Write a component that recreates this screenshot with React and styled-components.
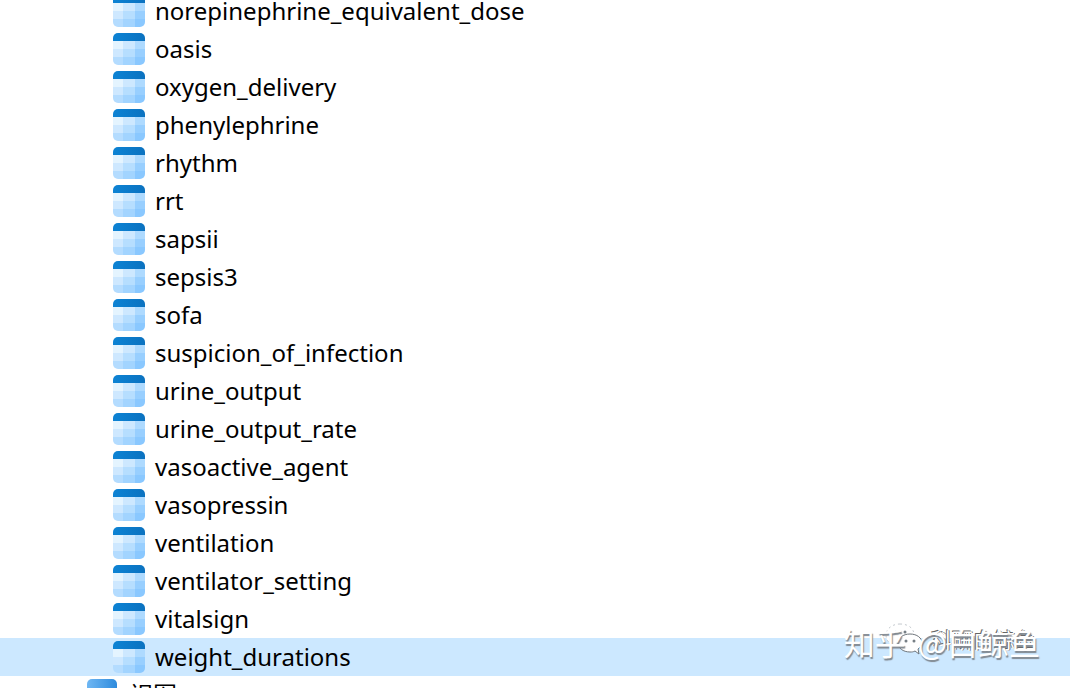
import React from "react";
import styled, { createGlobalStyle } from "styled-components";

const GlobalStyle = createGlobalStyle`
  * { box-sizing: border-box; }
  body { margin: 0; background: #fff; overflow: hidden; }
`;

const Panel = styled.main`
  position: relative;
  height: 100vh;
  overflow: hidden;
  background: #fff;
  color: #000;
  font-family: "Noto Sans", "Noto Sans CJK SC", sans-serif;
  font-size: 24px;
`;

const Tree = styled.ul`
  list-style: none;
  margin: -8px 0 0;
  padding: 0;
`;

const Row = styled.li`
  display: flex;
  align-items: center;
  gap: ${(p) => (p.$level === 1 ? 12 : 10)}px;
  height: 38px;
  padding-left: ${(p) => (p.$level === 1 ? 87 : 113)}px;
  background: ${(p) => (p.$selected ? "#cce8ff" : "transparent")};
`;

const Label = styled.span`
  line-height: 38px;
  white-space: nowrap;
`;

const Icon = styled.svg`
  flex: none;
  display: block;
`;

const Watermark = styled.div`
  position: absolute;
  right: 30px;
  bottom: 26px;
  display: grid;
  align-items: start;
  justify-items: end;
  font-family: "Noto Sans CJK SC", sans-serif;
  white-space: nowrap;
  pointer-events: none;

  > * { grid-area: 1 / 1; }
`;

const Account = styled.div`
  display: flex;
  align-items: center;
  gap: 8px;
  padding-right: 4px;
  font-size: 21px;
  line-height: 34px;
  color: #fff;
  text-shadow: -1px -1px 0 #666, 1px 0 0 #777;
`;

const Author = styled.div`
  display: flex;
  gap: 12px;
  font-size: 31px;
  line-height: 40px;
  color: #fff;
  text-shadow: 1px 2px 1px #808890;
`;

const shades = [
  ["#e4f4ff", "#cde8ff", "#aedaff"],
  ["#cee8ff", "#b6deff", "#98cfff"],
  ["#b4dcff", "#a2d4ff", "#8ac8ff"],
];
const columns = [0, 10, 22, 32];
const lines = [8, 16, 24, 32];

function TableIcon() {
  return (
    <Icon width="32" height="32" viewBox="0 0 32 32" aria-hidden="true">
      <defs>
        <clipPath id="tableShape"><rect width="32" height="32" rx="5" /></clipPath>
        <linearGradient id="tableHead">
          <stop stopColor="#0d83d4" />
          <stop offset="1" stopColor="#0b72c0" />
        </linearGradient>
      </defs>
      <g clipPath="url(#tableShape)">
        <rect width="32" height="8" fill="url(#tableHead)" />
        {shades.map((row, y) => row.map((fill, x) => (
          <rect
            key={`${x}-${y}`}
            x={columns[x]}
            y={lines[y]}
            width={columns[x + 1] - columns[x]}
            height={lines[y + 1] - lines[y]}
            fill={fill}
          />
        )))}
      </g>
    </Icon>
  );
}

function ViewIcon() {
  return (
    <Icon width="30" height="32" viewBox="0 0 30 32" aria-hidden="true">
      <defs>
        <linearGradient id="viewHead">
          <stop stopColor="#6fb7f3" />
          <stop offset="1" stopColor="#2e8bdd" />
        </linearGradient>
      </defs>
      <rect width="30" height="32" rx="5" fill="url(#viewHead)" />
    </Icon>
  );
}

function ChatLogo() {
  return (
    <Icon width="38" height="34" viewBox="0 0 38 34" aria-hidden="true">
      <path d="M15 2C7 2 1 7 1 13c0 4 2 7 5 9l-1 5 5-3c2 1 4 1 6 1C24 25 29 20 29 13S23 2 15 2Z" fill="#fff" stroke="#c5cacf" strokeWidth="1" strokeDasharray="2 3" />
      <path d="M25 12c-7 0-12 4-12 9s5 9 12 9c2 0 3 0 5-1l4 3-1-5c3-2 4-4 4-6 0-5-5-9-12-9Z" fill="#fff" stroke="#6d747a" strokeWidth="1" />
      <g fill="#777f86">
        <circle cx="11" cy="10" r="1.5" />
        <circle cx="20" cy="10" r="1.5" />
        <circle cx="21" cy="19" r="1.5" />
        <circle cx="29" cy="19" r="1.5" />
      </g>
    </Icon>
  );
}

const tables = [
  "norepinephrine_equivalent_dose", "oasis", "oxygen_delivery",
  "phenylephrine", "rhythm", "rrt", "sapsii", "sepsis3", "sofa",
  "suspicion_of_infection", "urine_output", "urine_output_rate",
  "vasoactive_agent", "vasopressin", "ventilation",
  "ventilator_setting", "vitalsign", "weight_durations",
];

export default function App() {
  return (
    <Panel>
      <GlobalStyle />
      <Tree>
        {tables.map((name) => (
          <Row key={name} $selected={name === "weight_durations"}>
            <TableIcon />
            <Label>{name}</Label>
          </Row>
        ))}
        <Row $level={1}>
          <ViewIcon />
          <Label>视图</Label>
        </Row>
      </Tree>
      <Watermark>
        <Account><ChatLogo />科研白鲸鱼</Account>
        <Author><span>知乎</span><span>@白鲸鱼</span></Author>
      </Watermark>
    </Panel>
  );
}
